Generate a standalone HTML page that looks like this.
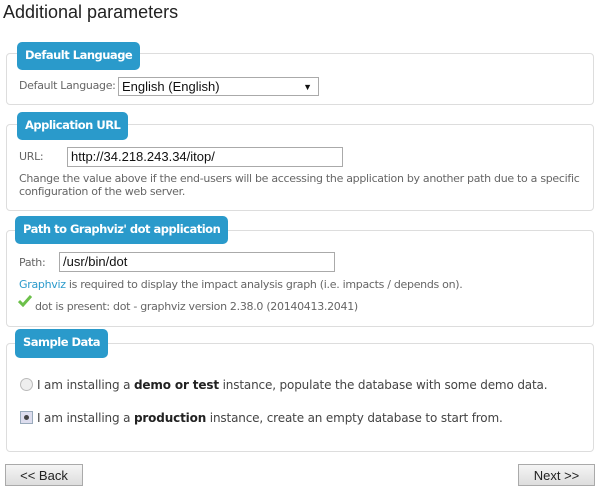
<!DOCTYPE html>
<html><head><style>
body{margin:0;width:600px;height:491px;background:#fff;font-family:"DejaVu Sans","Liberation Sans",sans-serif;color:#555;position:relative;overflow:hidden}
.a{position:absolute}
h1{position:absolute;left:3px;top:2px;margin:0;font:18px "Liberation Sans",sans-serif;color:#222}
.box{position:absolute;left:6px;width:586px;border:1px solid #ddd;border-radius:4px}
.lg{position:absolute;background:#2a9acb;color:#fff;font:bold 11.5px "DejaVu Sans",sans-serif;border-radius:5px;padding:0 8px;height:28px;line-height:27px;letter-spacing:-0.5px}
.t{position:absolute;font-size:11px;color:#666;white-space:nowrap;letter-spacing:-0.3px}
.in{position:absolute;border:1px solid #aaa;background:#fff;font:13px "Liberation Sans",sans-serif;color:#111;height:18px;line-height:18px;padding-left:3px;box-sizing:border-box}
.btn{position:absolute;border:1px solid #aaa;background:linear-gradient(#f5f5f5,#ddd);font:13px "Liberation Sans",sans-serif;color:#222;text-align:center;height:22px;line-height:21px;box-sizing:border-box}
b{color:#222}
</style></head><body>
<h1>Additional parameters</h1>
<div class="box" style="top:53px;height:50px"></div>
<div class="lg" style="left:17px;top:42px">Default Language</div>
<div class="t" style="left:19px;top:79px">Default Language:</div>
<div class="in" style="left:118px;top:77px;width:201px;height:19px">English (English)<span style="position:absolute;right:6px;font-size:9px">▼</span></div>

<div class="box" style="top:124px;height:85px"></div>
<div class="lg" style="left:17px;top:112px">Application URL</div>
<div class="t" style="left:19px;top:150px">URL:</div>
<div class="in" style="left:67px;top:147px;width:276px;height:20px">http://34.218.243.34/itop/</div>
<div class="t" style="left:19px;top:172px">Change the value above if the end-users will be accessing the application by another path due to a specific</div>
<div class="t" style="left:19px;top:185px">configuration of the web server.</div>

<div class="box" style="top:230px;height:95px"></div>
<div class="lg" style="left:15px;top:216px">Path to Graphviz' dot application</div>
<div class="t" style="left:19px;top:256px">Path:</div>
<div class="in" style="left:59px;top:252px;width:276px;height:20px">/usr/bin/dot</div>
<div class="t" style="left:19px;top:278px"><span style="color:#2a9acb">Graphviz</span> is required to display the impact analysis graph (i.e. impacts / depends on).</div>
<svg class="a" style="left:18px;top:295px" width="14" height="12" viewBox="0 0 14 12"><path d="M1 6 L5 10 L13 1" fill="none" stroke="#6cc04a" stroke-width="3"/></svg>
<div class="t" style="left:35px;top:300px">dot is present: dot - graphviz version 2.38.0 (20140413.2041)</div>

<div class="box" style="top:343px;height:107px"></div>
<div class="lg" style="left:15px;top:329px;height:29px">Sample Data</div>
<div class="a" style="left:20px;top:378px;width:11px;height:11px;border:1px solid #bbb;border-radius:50%;background:#eee"></div>
<div class="t" style="left:37px;top:378px;font-size:12px;color:#444;letter-spacing:-0.15px">I am installing a <b>demo or test</b> instance, populate the database with some demo data.</div>
<div class="a" style="left:20px;top:411px;width:11px;height:11px;border:1px solid #9ab;background:#dde;"><div style="margin:3px;width:5px;height:5px;border-radius:50%;background:#444"></div></div>
<div class="t" style="left:37px;top:411px;font-size:12px;color:#444;letter-spacing:-0.15px">I am installing a <b>production</b> instance, create an empty database to start from.</div>

<div class="btn" style="left:5px;top:464px;width:78px">&lt;&lt; Back</div>
<div class="btn" style="left:518px;top:464px;width:77px">Next &gt;&gt;</div>
</body></html>
